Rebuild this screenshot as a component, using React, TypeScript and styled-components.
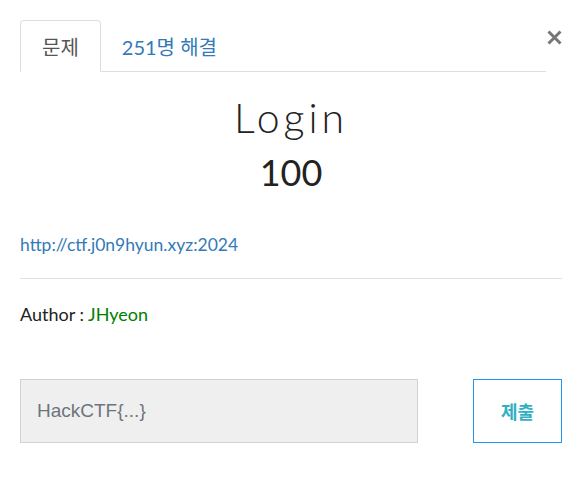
import React from "react";
import styled, { createGlobalStyle } from "styled-components";

const Global = createGlobalStyle`
  html, body { margin: 0; padding: 0; background: #fff; }
  body { font-family: Lato, "Noto Sans CJK KR", sans-serif; color: #333; }
  * { box-sizing: border-box; }
`;

const Modal = styled.div`
  width: 582px;
  padding: 20px 20px 40px 20px;
  display: flex;
  flex-direction: column;
`;

const Header = styled.div`
  display: flex;
  align-items: flex-start;
`;

const TabList = styled.div`
  flex: 1;
  display: flex;
  border-bottom: 1px solid #ddd;
`;

const Tab = styled.div<{ $active?: boolean }>`
  height: 52px;
  margin-bottom: -1px;
  padding: 0 21px;
  display: flex;
  align-items: center;
  font-family: Lato, "Noto Sans CJK KR", sans-serif;
  font-size: 20px;
  color: ${(p) => (p.$active ? "#555" : "#337ab7")};
  background: ${(p) => (p.$active ? "#fff" : "transparent")};
  border: ${(p) => (p.$active ? "1px solid #ddd" : "none")};
  border-bottom-color: #fff;
  border-radius: 4px 4px 0 0;
`;

const Close = styled.div`
  margin-top: 9px;
  width: 16px;
  height: 16px;
  display: flex;
  align-items: center;
  justify-content: flex-end;
`;

const Title = styled.h1`
  margin: 22px 0 0;
  text-align: center;
  font-family: Lato, sans-serif;
  font-weight: 300;
  font-size: 41px;
  letter-spacing: 4px;
  line-height: 48px;
  color: #222;
`;

const Points = styled.div`
  margin-top: 8px;
  text-align: center;
  font-family: Lato, sans-serif;
  font-size: 36px;
  line-height: 44px;
  color: #222;
`;

const Link = styled.a`
  margin-top: 39px;
  font-family: Lato, sans-serif;
  font-size: 17.5px;
  line-height: 24px;
  color: #337ab7;
  text-decoration: none;
`;

const Rule = styled.hr`
  margin: 21px 0 23px;
  border: 0;
  border-top: 1px solid #e3e3e3;
`;

const Author = styled.div`
  font-family: Lato, sans-serif;
  font-size: 18px;
  line-height: 24px;
  color: #222;
`;

const Green = styled.span`
  color: #008000;
`;

const FormRow = styled.div`
  margin-top: 53px;
  display: flex;
  justify-content: space-between;
`;

const Input = styled.input`
  width: 398px;
  height: 64px;
  padding: 0 16px;
  background: #efefef;
  border: 1px solid #cfd3d7;
  font-family: "Liberation Sans", Arial, sans-serif;
  font-size: 19px;
  outline: none;
  &::placeholder { color: #6c757d; }
`;

const Submit = styled.button`
  width: 89px;
  height: 64px;
  background: #fff;
  border: 1px solid #2196f3;
  font-family: "Noto Sans CJK KR", sans-serif;
  font-weight: 700;
  font-size: 18px;
  color: #31b0c5;
`;

export default function App() {
  return (
    <>
      <Global />
      <Modal>
        <Header>
          <TabList>
            <Tab $active>문제</Tab>
            <Tab>251명 해결</Tab>
          </TabList>
          <Close>
            <svg width="15" height="15" viewBox="0 0 15 15">
              <path d="M1.5 1.5 L13.5 13.5 M13.5 1.5 L1.5 13.5" stroke="#777" strokeWidth="3" />
            </svg>
          </Close>
        </Header>
        <Title>Login</Title>
        <Points>100</Points>
        <Link href="#">http://ctf.j0n9hyun.xyz:2024</Link>
        <Rule />
        <Author>
          Author : <Green>JHyeon</Green>
        </Author>
        <FormRow>
          <Input placeholder="HackCTF{...}" />
          <Submit>제출</Submit>
        </FormRow>
      </Modal>
    </>
  );
}
